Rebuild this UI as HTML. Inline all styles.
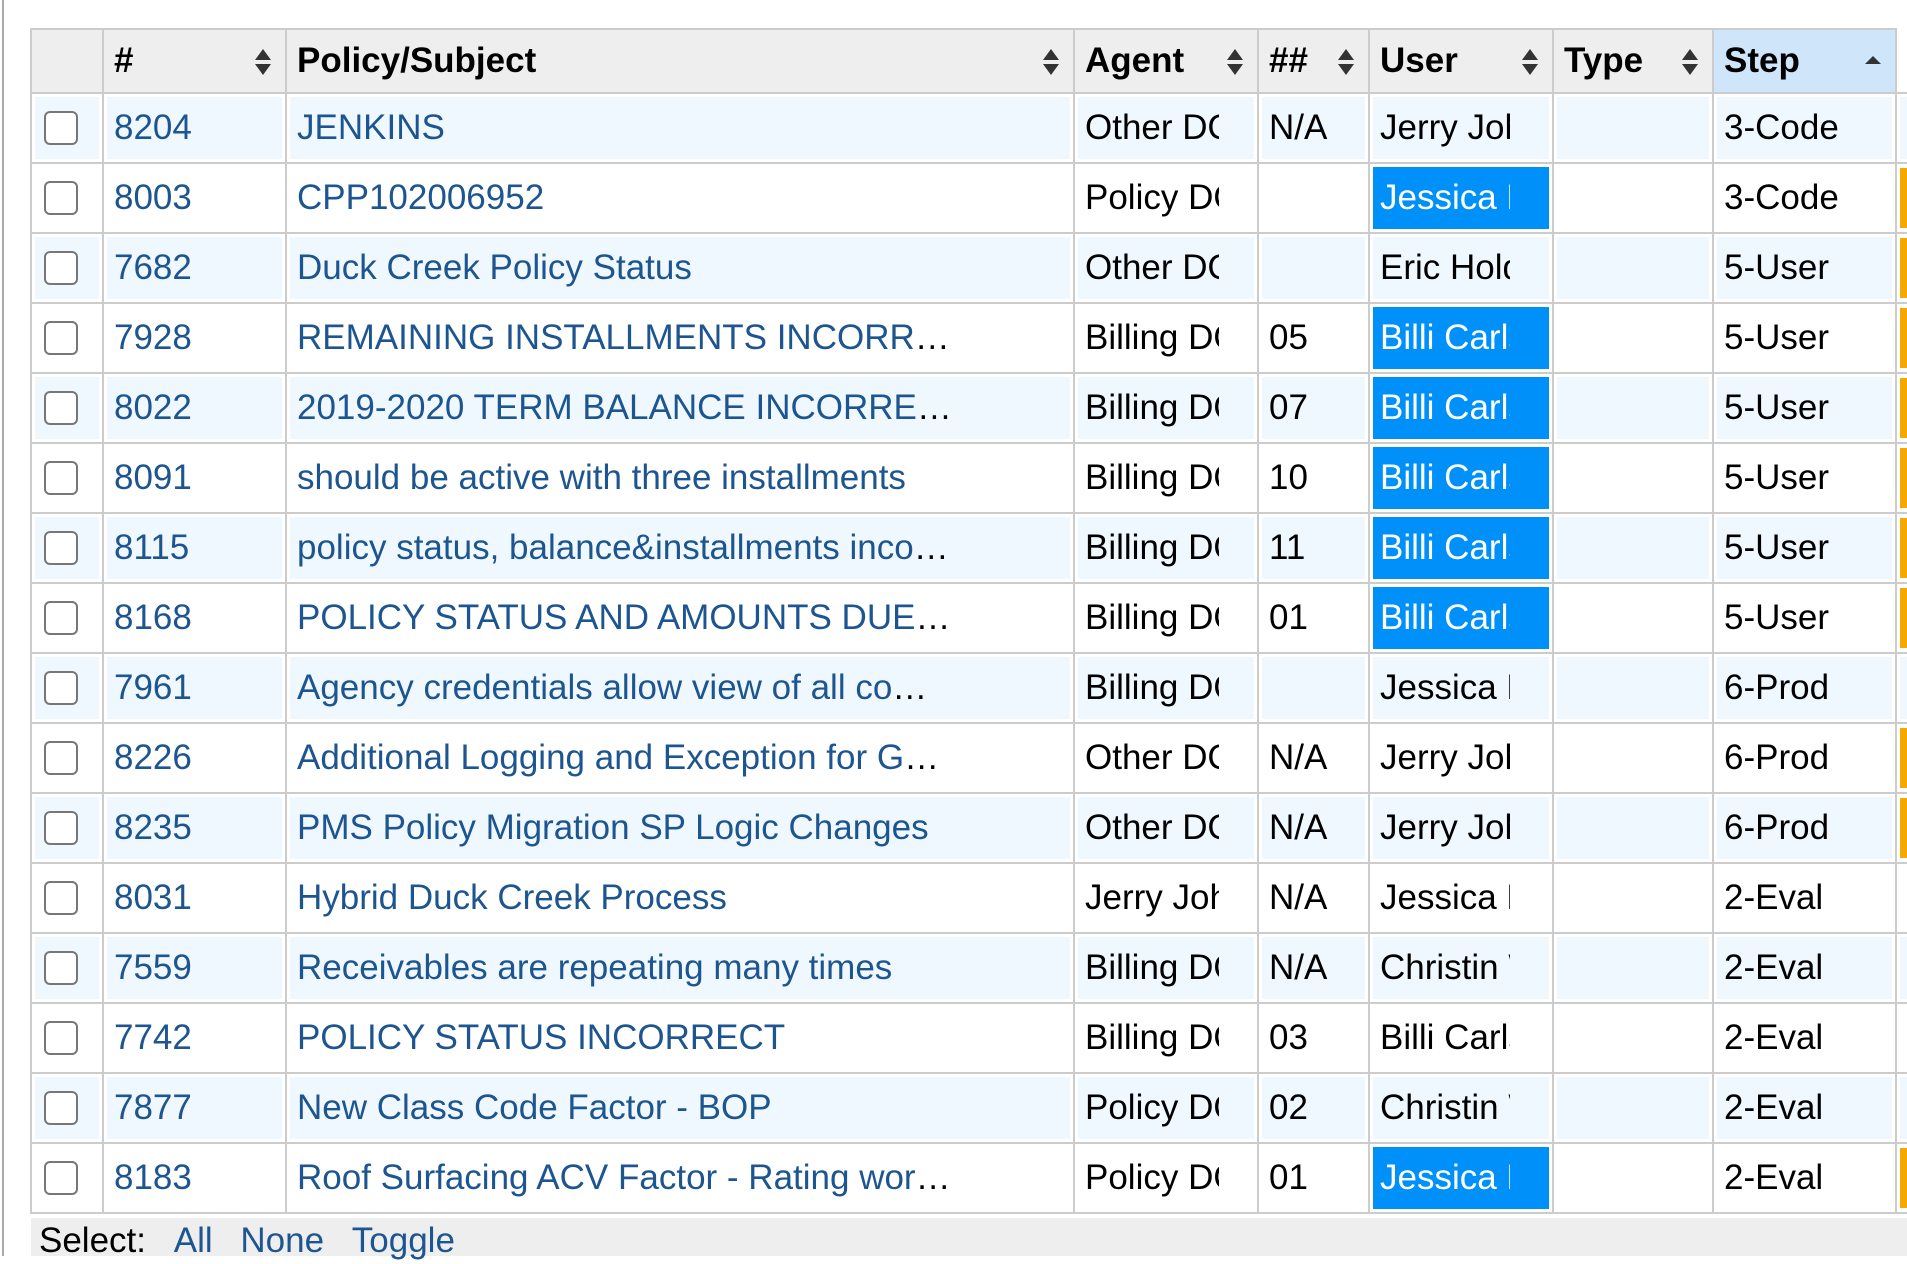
<!DOCTYPE html>
<html><head><meta charset="utf-8"><style>
html,body{margin:0;padding:0;width:1907px;height:1256px;overflow:hidden;background:#fff;font-family:"Liberation Sans",Arial,sans-serif;}
.lb{position:absolute;left:2px;top:0;width:2px;height:1256px;background:#aaa;}
table{position:absolute;left:30px;top:28px;border-collapse:collapse;table-layout:fixed;width:1880px;font-size:35px;}
td,th{border:2px solid #ccc;padding:0 10px;height:68px;white-space:nowrap;overflow:hidden;text-align:left;vertical-align:middle;}
th{background:#eee;height:62px;font-weight:bold;color:#000;position:relative;}
tr.o td{background:#f0f8ff;box-shadow:inset 0 0 0 3px #fff;}
td{color:#000;}
td .c{overflow:hidden;}
a{color:#1d5590;text-decoration:none;}
.s{position:absolute;right:14px;top:19px;width:16px;height:26px;}
.cb{width:30px;height:30px;border:2px solid #777;border-radius:6px;background:#fff;margin-left:2px;}
td.u{background:#0090fa!important;color:#fff;box-shadow:inset 0 0 0 3px #fff!important;}
td.x{padding:0;}
td.x.or{box-shadow:inset 3px 4px 0 0 #fff, inset 0 -4px 0 0 #fff!important;background:#f5a800!important;}
.foot{position:absolute;left:31px;top:1218px;width:1876px;height:38px;background:#eee;font-size:35px;line-height:46px;padding-left:8px;color:#000;}
.foot a{margin-left:18px;}
</style></head><body>
<div class="lb"></div>
<table>
<colgroup><col style="width:72px"><col style="width:183px"><col style="width:788px"><col style="width:184px"><col style="width:111px"><col style="width:184px"><col style="width:160px"><col style="width:183px"><col style="width:15px"></colgroup>
<tr><th></th>
<th>#<svg class="s" viewBox="0 0 16 26"><path d="M8 0L16 11H0z M8 26L16 15H0z" fill="#333"/></svg></th>
<th>Policy/Subject<svg class="s" viewBox="0 0 16 26"><path d="M8 0L16 11H0z M8 26L16 15H0z" fill="#333"/></svg></th>
<th>Agent<svg class="s" viewBox="0 0 16 26"><path d="M8 0L16 11H0z M8 26L16 15H0z" fill="#333"/></svg></th>
<th>##<svg class="s" viewBox="0 0 16 26"><path d="M8 0L16 11H0z M8 26L16 15H0z" fill="#333"/></svg></th>
<th>User<svg class="s" viewBox="0 0 16 26"><path d="M8 0L16 11H0z M8 26L16 15H0z" fill="#333"/></svg></th>
<th>Type<svg class="s" viewBox="0 0 16 26"><path d="M8 0L16 11H0z M8 26L16 15H0z" fill="#333"/></svg></th>
<th style="background:#cfe5fa">Step<svg class="s" viewBox="0 0 16 26"><path d="M8 7L16 15H0z" fill="#333"/></svg></th>
<th class="x" style="background:#fff;border-right:none;border-top:none"></th></tr>

<tr class="o"><td><div class="cb"></div></td><td><a>8204</a></td><td><a>JENKINS</a></td><td><div class="c" style="width:134px">Other DOC</div></td><td>N/A</td><td><div class="c" style="width:130px">Jerry Johnson</div></td><td></td><td>3-Code</td><td class="x"></td></tr>
<tr><td><div class="cb"></div></td><td><a>8003</a></td><td><a>CPP102006952</a></td><td><div class="c" style="width:134px">Policy DOC</div></td><td></td><td class="u"><div class="c" style="width:130px">Jessica Lee</div></td><td></td><td>3-Code</td><td class="x or"></td></tr>
<tr class="o"><td><div class="cb"></div></td><td><a>7682</a></td><td><a>Duck Creek Policy Status</a></td><td><div class="c" style="width:134px">Other DOC</div></td><td></td><td><div class="c" style="width:130px">Eric Holden</div></td><td></td><td>5-User</td><td class="x or"></td></tr>
<tr><td><div class="cb"></div></td><td><a>7928</a></td><td><a>REMAINING INSTALLMENTS INCORR</a>…</td><td><div class="c" style="width:134px">Billing DOC</div></td><td>05</td><td class="u"><div class="c" style="width:130px">Billi Carlson</div></td><td></td><td>5-User</td><td class="x or"></td></tr>
<tr class="o"><td><div class="cb"></div></td><td><a>8022</a></td><td><a>2019-2020 TERM BALANCE INCORRE</a>…</td><td><div class="c" style="width:134px">Billing DOC</div></td><td>07</td><td class="u"><div class="c" style="width:130px">Billi Carlson</div></td><td></td><td>5-User</td><td class="x or"></td></tr>
<tr><td><div class="cb"></div></td><td><a>8091</a></td><td><a>should be active with three installments</a></td><td><div class="c" style="width:134px">Billing DOC</div></td><td>10</td><td class="u"><div class="c" style="width:130px">Billi Carlson</div></td><td></td><td>5-User</td><td class="x or"></td></tr>
<tr class="o"><td><div class="cb"></div></td><td><a>8115</a></td><td><a>policy status, balance&amp;installments inco</a>…</td><td><div class="c" style="width:134px">Billing DOC</div></td><td>11</td><td class="u"><div class="c" style="width:130px">Billi Carlson</div></td><td></td><td>5-User</td><td class="x or"></td></tr>
<tr><td><div class="cb"></div></td><td><a>8168</a></td><td><a>POLICY STATUS AND AMOUNTS DUE</a>…</td><td><div class="c" style="width:134px">Billing DOC</div></td><td>01</td><td class="u"><div class="c" style="width:130px">Billi Carlson</div></td><td></td><td>5-User</td><td class="x or"></td></tr>
<tr class="o"><td><div class="cb"></div></td><td><a>7961</a></td><td><a>Agency credentials allow view of all co</a>…</td><td><div class="c" style="width:134px">Billing DOC</div></td><td></td><td><div class="c" style="width:130px">Jessica Lee</div></td><td></td><td>6-Prod</td><td class="x"></td></tr>
<tr><td><div class="cb"></div></td><td><a>8226</a></td><td><a>Additional Logging and Exception for G</a>…</td><td><div class="c" style="width:134px">Other DOC</div></td><td>N/A</td><td><div class="c" style="width:130px">Jerry Johnson</div></td><td></td><td>6-Prod</td><td class="x or"></td></tr>
<tr class="o"><td><div class="cb"></div></td><td><a>8235</a></td><td><a>PMS Policy Migration SP Logic Changes</a></td><td><div class="c" style="width:134px">Other DOC</div></td><td>N/A</td><td><div class="c" style="width:130px">Jerry Johnson</div></td><td></td><td>6-Prod</td><td class="x or"></td></tr>
<tr><td><div class="cb"></div></td><td><a>8031</a></td><td><a>Hybrid Duck Creek Process</a></td><td><div class="c" style="width:134px">Jerry Johnson</div></td><td>N/A</td><td><div class="c" style="width:130px">Jessica Lee</div></td><td></td><td>2-Eval</td><td class="x"></td></tr>
<tr class="o"><td><div class="cb"></div></td><td><a>7559</a></td><td><a>Receivables are repeating many times</a></td><td><div class="c" style="width:134px">Billing DOC</div></td><td>N/A</td><td><div class="c" style="width:130px">Christin Web</div></td><td></td><td>2-Eval</td><td class="x"></td></tr>
<tr><td><div class="cb"></div></td><td><a>7742</a></td><td><a>POLICY STATUS INCORRECT</a></td><td><div class="c" style="width:134px">Billing DOC</div></td><td>03</td><td><div class="c" style="width:130px">Billi Carlson</div></td><td></td><td>2-Eval</td><td class="x"></td></tr>
<tr class="o"><td><div class="cb"></div></td><td><a>7877</a></td><td><a>New Class Code Factor - BOP</a></td><td><div class="c" style="width:134px">Policy DOC</div></td><td>02</td><td><div class="c" style="width:130px">Christin Web</div></td><td></td><td>2-Eval</td><td class="x"></td></tr>
<tr><td><div class="cb"></div></td><td><a>8183</a></td><td><a>Roof Surfacing ACV Factor - Rating wor</a>…</td><td><div class="c" style="width:134px">Policy DOC</div></td><td>01</td><td class="u"><div class="c" style="width:130px">Jessica Lee</div></td><td></td><td>2-Eval</td><td class="x or"></td></tr>
</table>
<div class="foot">Select: <a>All</a> <a>None</a> <a>Toggle</a></div>
</body></html>
